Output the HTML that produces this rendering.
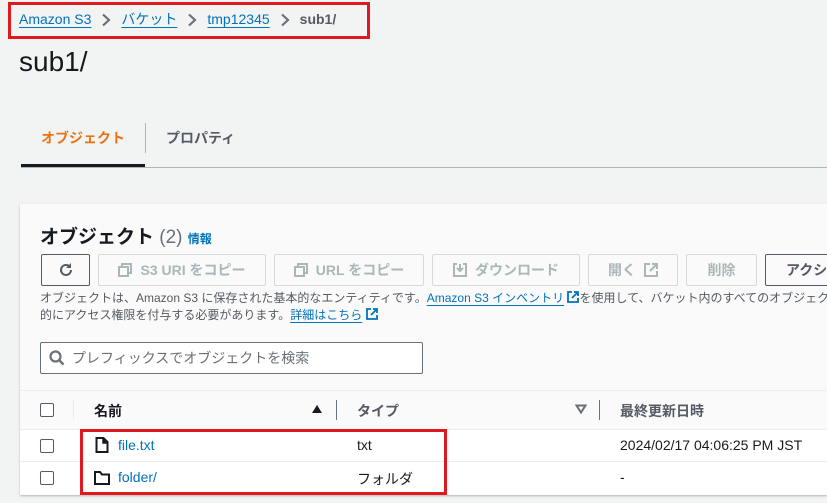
<!DOCTYPE html>
<html><head><meta charset="utf-8"><style>
*{box-sizing:border-box;margin:0;padding:0}
body{width:827px;height:503px;overflow:hidden;background:#f2f3f3;font-family:"Liberation Sans","Noto Sans CJK JP",sans-serif;color:#16191f;position:relative}
.a{position:absolute;white-space:nowrap}
.lnk{color:#0073bb;text-decoration:underline;text-underline-offset:3px}
.btn{position:absolute;top:254px;height:32px;border:1px solid #d5dbdb;border-radius:2px;background:#fafafa;color:#aab7b8;font-weight:bold;font-size:14px;display:flex;align-items:center;justify-content:center;gap:8px}
.cb{position:absolute;left:40px;width:14px;height:14px;border:1.5px solid #545b64;border-radius:2px;background:#fff}
.hline{position:absolute;left:20px;right:0;height:1px;background:#eaeded}
.chev{display:inline-block;vertical-align:middle;margin:0 10px}
</style></head><body>
<div class="a" style="left:8px;top:2px;width:362px;height:37px;border:3px solid #e0191f"></div>
<div class="a" style="left:19px;top:9px;font-size:14px;color:#545b64">
<span class="lnk">Amazon S3</span><svg class="chev" width="10" height="14" viewBox="0 0 10 14"><path d="M2 1.5l6 5.5-6 5.5" fill="none" stroke="#687078" stroke-width="2.2"/></svg><span class="lnk">バケット</span><svg class="chev" width="10" height="14" viewBox="0 0 10 14"><path d="M2 1.5l6 5.5-6 5.5" fill="none" stroke="#687078" stroke-width="2.2"/></svg><span class="lnk">tmp12345</span><svg class="chev" width="10" height="14" viewBox="0 0 10 14"><path d="M2 1.5l6 5.5-6 5.5" fill="none" stroke="#687078" stroke-width="2.2"/></svg><b>sub1/</b></div>
<div class="a" style="left:19px;top:46px;font-size:28px">sub1/</div>
<div class="a" style="left:41px;top:128px;font-size:14px;color:#ec7211;font-weight:bold">オブジェクト</div>
<div class="a" style="left:145px;top:123px;width:1px;height:30px;background:#aab7b8"></div>
<div class="a" style="left:166px;top:128px;font-size:14px;color:#545b64;font-weight:bold">プロパティ</div>
<div class="a" style="left:21px;top:164px;width:124px;height:3px;background:#16191f"></div>
<div class="a" style="left:21px;top:167px;width:806px;height:1px;background:#aab7b8"></div>
<div class="a" style="left:20px;top:204px;width:807px;height:291px;background:#fafafa;box-shadow:0 1px 2px rgba(0,0,0,.25)"></div>
<div class="a" style="left:40px;top:222px;font-size:19px;font-weight:bold">オブジェクト <span style="font-weight:normal;color:#687078">(2)</span> <span style="font-size:12px;color:#0073bb">情報</span></div>
<div class="btn" style="left:41px;width:49px;border-color:#545b64"><svg width="16" height="16" viewBox="0 0 16 16"><path d="M13 8a5 5 0 1 1-1.5-3.6" fill="none" stroke="#545b64" stroke-width="2"/><path d="M13 1v5h-5z" fill="#545b64"/></svg></div>
<div class="btn" style="left:98px;width:168px"><svg width="14" height="14" viewBox="0 0 14 14"><path d="M4 4V1h9v9h-3M1 4h9v9H1z" fill="none" stroke="#aab7b8" stroke-width="2"/></svg>S3 URI をコピー</div>
<div class="btn" style="left:274px;width:150px"><svg width="14" height="14" viewBox="0 0 14 14"><path d="M4 4V1h9v9h-3M1 4h9v9H1z" fill="none" stroke="#aab7b8" stroke-width="2"/></svg>URL をコピー</div>
<div class="btn" style="left:432px;width:148px"><svg width="14" height="14" viewBox="0 0 14 14"><path d="M4 1H1v12h12V1h-3M7 1v7M4 5l3 3 3-3" fill="none" stroke="#aab7b8" stroke-width="2"/></svg>ダウンロード</div>
<div class="btn" style="left:588px;width:90px">開く<svg width="14" height="14" viewBox="0 0 14 14"><path d="M6 1H1v12h12V8M8 1h5v5M13 1L6 8" fill="none" stroke="#aab7b8" stroke-width="2"/></svg></div>
<div class="btn" style="left:686px;width:71px">削除</div>
<div class="btn" style="left:765px;width:80px;border-color:#545b64;color:#545b64;justify-content:flex-start;padding-left:20px">アクシ</div>
<div class="a" style="left:40px;top:290px;font-size:12px;color:#545b64;line-height:17px">オブジェクトは、Amazon S3 に保存された基本的なエンティティです。<span class="lnk">Amazon S3 インベントリ</span> <svg width="12" height="12" viewBox="0 0 12 12" style="vertical-align:-1px"><path d="M5 1H1v10h10V7M7 1h4v4M11 1L5 7" fill="none" stroke="#0073bb" stroke-width="1.8"/></svg>を使用して、バケット内のすべてのオブジェクト<br>的にアクセス権限を付与する必要があります。<span class="lnk">詳細はこちら</span> <svg width="12" height="12" viewBox="0 0 12 12" style="vertical-align:-1px"><path d="M5 1H1v10h10V7M7 1h4v4M11 1L5 7" fill="none" stroke="#0073bb" stroke-width="1.8"/></svg></div>
<div class="a" style="left:40px;top:342px;width:383px;height:32px;border:1px solid #687078;border-radius:2px;background:#fff"></div>
<svg class="a" style="left:48px;top:349px" width="18" height="18" viewBox="0 0 18 18"><circle cx="7.5" cy="7.5" r="5" fill="none" stroke="#687078" stroke-width="2.2"/><path d="M11 11l4.5 4.5" stroke="#687078" stroke-width="2.4"/></svg>
<div class="a" style="left:72px;top:348px;font-size:14px;color:#687078">プレフィックスでオブジェクトを検索</div>
<div class="hline" style="top:390px"></div>
<div class="a" style="left:20px;top:430px;width:807px;height:64px;background:#fff"></div>
<div class="hline" style="top:429px"></div>
<div class="hline" style="top:461px"></div>
<div class="cb" style="top:403px"></div>
<div class="a" style="left:73px;top:400px;width:1px;height:20px;background:#eaeded"></div>
<div class="a" style="left:94px;top:401px;font-size:14px;font-weight:bold">名前</div>
<svg class="a" style="left:311px;top:404px" width="12" height="10" viewBox="0 0 12 10"><path d="M6 1l5 8H1z" fill="#16191f"/></svg>
<div class="a" style="left:336px;top:400px;width:1px;height:20px;background:#687078"></div>
<div class="a" style="left:357px;top:401px;font-size:14px;color:#545b64;font-weight:bold">タイプ</div>
<svg class="a" style="left:575px;top:404px" width="12" height="10" viewBox="0 0 12 10"><path d="M1.5 1.5h9L6 8.5z" fill="none" stroke="#687078" stroke-width="2"/></svg>
<div class="a" style="left:599px;top:400px;width:1px;height:20px;background:#687078"></div>
<div class="a" style="left:620px;top:401px;font-size:14px;color:#545b64;font-weight:bold">最終更新日時</div>
<div class="cb" style="top:439px"></div>
<div class="cb" style="top:471px"></div>
<div class="a" style="left:80px;top:429px;width:367px;height:66px;border:3px solid #e0191f"></div>
<svg class="a" style="left:95px;top:437px" width="14" height="16" viewBox="0 0 14 16"><path d="M1.5 1h7l4 4v10h-11z" fill="none" stroke="#16191f" stroke-width="2"/><path d="M8 1v5h5" fill="#16191f" stroke="#16191f" stroke-width="1.5"/></svg>
<div class="a" style="left:118px;top:437px;font-size:14px;color:#0073bb">file.txt</div>
<div class="a" style="left:357px;top:437px;font-size:14px">txt</div>
<div class="a" style="left:620px;top:437px;font-size:14px">2024/02/17 04:06:25 PM JST</div>
<svg class="a" style="left:94px;top:471px" width="16" height="14" viewBox="0 0 16 14"><path d="M1 1h5l2 2.5h7v9.5h-14z" fill="none" stroke="#16191f" stroke-width="2"/></svg>
<div class="a" style="left:118px;top:469px;font-size:14px;color:#0073bb">folder/</div>
<div class="a" style="left:357px;top:469px;font-size:14px">フォルダ</div>
<div class="a" style="left:620px;top:469px;font-size:14px">-</div>
</body></html>
